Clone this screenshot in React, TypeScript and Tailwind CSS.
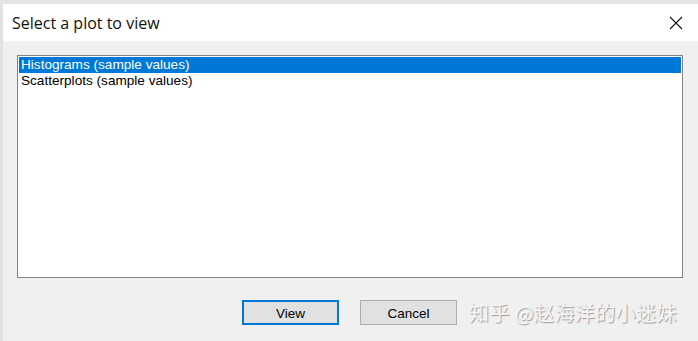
export default function App() {
  return (
    <div className="w-[698px] h-[341px] bg-[#e8e8e8] flex flex-col overflow-hidden" style={{ fontFamily: '"Liberation Sans", Arial, sans-serif' }}>
      <div className="h-[4px] bg-[#e4e4e4]" />
      <div className="flex flex-1 min-h-0">
        <div className="w-[3px] bg-[#e2e2e2]" />
        <div className="flex-1 flex flex-col">
          <div className="h-[37px] bg-white flex items-center justify-between pl-[9px] pr-[14px]">
            <span className="text-[16px] text-[#111] pt-[1px]" style={{ fontFamily: '"Open Sans", "Noto Sans", sans-serif' }}>Select a plot to view</span>
            <svg width="14" height="14" viewBox="0 0 14 14" className="mr-[1px] mt-[1px]">
              <path d="M1 1 L13 13 M13 1 L1 13" stroke="#111" strokeWidth="1.1" />
            </svg>
          </div>
          <div className="flex-1 bg-[#f0f0f0] flex flex-col pl-[14px] pr-[15px] pt-[14px]">
            <div className="h-[223px] border border-[#828282] bg-white p-[1px] text-[13.6px] leading-[16px]">
              <div className="bg-[#0078d7] text-white pl-[2px] h-[16px]">Histograms (sample values)</div>
              <div className="text-black pl-[2px] h-[16px]">Scatterplots (sample values)</div>
            </div>
            <div className="flex items-center mt-[22px] h-[25px]">
              <div className="w-[225px]" />
              <button className="w-[97px] h-[25px] border-2 border-[#0078d7] bg-[#e1e1e1] text-[13.5px] leading-[16px] pt-[2px] text-black">View</button>
              <button className="ml-[21px] w-[97px] h-[25px] border border-[#adadad] bg-[#e1e1e1] text-[13.5px] leading-[16px] pt-[2px] text-black">Cancel</button>
              <span className="ml-[12px] text-[20px] leading-[24px] text-[#f6f6f6] tracking-[0.4px]" style={{ fontFamily: '"Noto Sans CJK SC", sans-serif', textShadow: '1px 1px 1px #9a9a9a' }}>知乎 @赵海洋的小迷妹</span>
            </div>
          </div>
        </div>
      </div>
    </div>
  );
}
